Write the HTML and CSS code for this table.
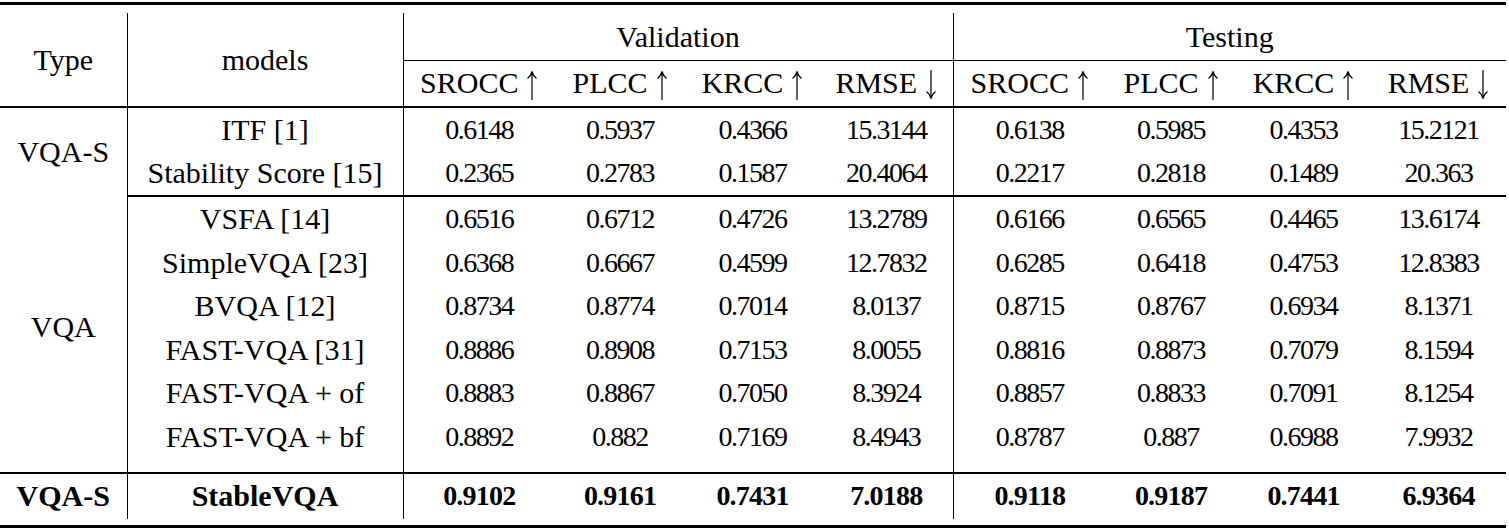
FILE: index.html
```html
<!DOCTYPE html>
<html>
<head>
<meta charset="utf-8">
<link rel="stylesheet" href="styles.css">
</head>
<body>
<div class="sheet">
<table class="results">
<colgroup>
<col class="w-type"><col class="w-model">
<col class="w-a"><col class="w-b"><col class="w-c"><col class="w-d">
<col class="w-e"><col class="w-f"><col class="w-g"><col class="w-h">
</colgroup>
<tr class="spacer-top"><td></td><td></td><td></td><td></td><td></td><td></td><td></td><td></td><td></td><td></td></tr>
<tr class="head1">
<td rowspan="2" class="hdr-type">Type</td>
<td rowspan="2" class="vl hdr-type">models</td>
<td colspan="4" class="vl group">Validation</td>
<td colspan="4" class="vl group">Testing</td>
</tr>
<tr class="head2">
<td class="vl">SROCC<svg class="arr" viewBox="0 0 12 30"><path d="M6 2V30M1.5 8.5C4 6.5 5.3 4.5 6 1.5C6.7 4.5 8 6.5 10.5 8.5"/></svg></td>
<td>PLCC<svg class="arr" viewBox="0 0 12 30"><path d="M6 2V30M1.5 8.5C4 6.5 5.3 4.5 6 1.5C6.7 4.5 8 6.5 10.5 8.5"/></svg></td>
<td>KRCC<svg class="arr" viewBox="0 0 12 30"><path d="M6 2V30M1.5 8.5C4 6.5 5.3 4.5 6 1.5C6.7 4.5 8 6.5 10.5 8.5"/></svg></td>
<td>RMSE<svg class="arr" viewBox="0 0 12 30"><path d="M6 0V28M1.5 21.5C4 23.5 5.3 25.5 6 28.5C6.7 25.5 8 23.5 10.5 21.5"/></svg></td>
<td class="vl">SROCC<svg class="arr" viewBox="0 0 12 30"><path d="M6 2V30M1.5 8.5C4 6.5 5.3 4.5 6 1.5C6.7 4.5 8 6.5 10.5 8.5"/></svg></td>
<td>PLCC<svg class="arr" viewBox="0 0 12 30"><path d="M6 2V30M1.5 8.5C4 6.5 5.3 4.5 6 1.5C6.7 4.5 8 6.5 10.5 8.5"/></svg></td>
<td>KRCC<svg class="arr" viewBox="0 0 12 30"><path d="M6 2V30M1.5 8.5C4 6.5 5.3 4.5 6 1.5C6.7 4.5 8 6.5 10.5 8.5"/></svg></td>
<td>RMSE<svg class="arr" viewBox="0 0 12 30"><path d="M6 0V28M1.5 21.5C4 23.5 5.3 25.5 6 28.5C6.7 25.5 8 23.5 10.5 21.5"/></svg></td>
</tr>
<tr class="row">
<td rowspan="2" class="type">VQA-S</td>
<td class="vl">ITF [1]</td>
<td class="vl num">0.6148</td><td class="num">0.5937</td><td class="num">0.4366</td><td class="num">15.3144</td>
<td class="vl num">0.6138</td><td class="num">0.5985</td><td class="num">0.4353</td><td class="num">15.2121</td>
</tr>
<tr class="row end">
<td class="vl">Stability Score [15]</td>
<td class="vl num">0.2365</td><td class="num">0.2783</td><td class="num">0.1587</td><td class="num">20.4064</td>
<td class="vl num">0.2217</td><td class="num">0.2818</td><td class="num">0.1489</td><td class="num">20.363</td>
</tr>
<tr class="row">
<td rowspan="6" class="type">VQA</td>
<td class="vl">VSFA [14]</td>
<td class="vl num">0.6516</td><td class="num">0.6712</td><td class="num">0.4726</td><td class="num">13.2789</td>
<td class="vl num">0.6166</td><td class="num">0.6565</td><td class="num">0.4465</td><td class="num">13.6174</td>
</tr>
<tr class="row">
<td class="vl">SimpleVQA [23]</td>
<td class="vl num">0.6368</td><td class="num">0.6667</td><td class="num">0.4599</td><td class="num">12.7832</td>
<td class="vl num">0.6285</td><td class="num">0.6418</td><td class="num">0.4753</td><td class="num">12.8383</td>
</tr>
<tr class="row">
<td class="vl">BVQA [12]</td>
<td class="vl num">0.8734</td><td class="num">0.8774</td><td class="num">0.7014</td><td class="num">8.0137</td>
<td class="vl num">0.8715</td><td class="num">0.8767</td><td class="num">0.6934</td><td class="num">8.1371</td>
</tr>
<tr class="row">
<td class="vl">FAST-VQA [31]</td>
<td class="vl num">0.8886</td><td class="num">0.8908</td><td class="num">0.7153</td><td class="num">8.0055</td>
<td class="vl num">0.8816</td><td class="num">0.8873</td><td class="num">0.7079</td><td class="num">8.1594</td>
</tr>
<tr class="row">
<td class="vl">FAST-VQA + of</td>
<td class="vl num">0.8883</td><td class="num">0.8867</td><td class="num">0.7050</td><td class="num">8.3924</td>
<td class="vl num">0.8857</td><td class="num">0.8833</td><td class="num">0.7091</td><td class="num">8.1254</td>
</tr>
<tr class="row">
<td class="vl">FAST-VQA + bf</td>
<td class="vl num">0.8892</td><td class="num">0.882</td><td class="num">0.7169</td><td class="num">8.4943</td>
<td class="vl num">0.8787</td><td class="num">0.887</td><td class="num">0.6988</td><td class="num">7.9932</td>
</tr>
<tr class="gap end">
<td></td><td class="vl"></td><td class="vl" colspan="4"></td><td class="vl" colspan="4"></td>
</tr>
<tr class="row best">
<td class="type">VQA-S</td>
<td class="vl">StableVQA</td>
<td class="vl num">0.9102</td><td class="num">0.9161</td><td class="num">0.7431</td><td class="num">7.0188</td>
<td class="vl num">0.9118</td><td class="num">0.9187</td><td class="num">0.7441</td><td class="num">6.9364</td>
</tr>
<tr class="spacer-bottom"><td></td><td></td><td></td><td></td><td></td><td></td><td></td><td></td><td></td><td></td></tr>
</table>
</div>
</body>
</html>
```
FILE: styles.css
```css
html, body {
  margin: 0;
  padding: 0;
  background: #ffffff;
}

.sheet {
  margin-top: 2px;
  width: 1506px;
  border-top: 3px solid #000;
  border-bottom: 3px solid #000;
}

.results {
  width: 1506px;
  table-layout: fixed;
  border-collapse: collapse;
  font-family: "Liberation Serif", "Times New Roman", serif;
  font-size: 30px;
  color: #000;
}

.w-type { width: 127px; }
.w-model { width: 276px; }
.w-a { width: 152px; }
.w-b { width: 130px; }
.w-c { width: 135px; }
.w-d { width: 133px; }
.w-e { width: 153px; }
.w-f { width: 130px; }
.w-g { width: 135px; }
.w-h { width: 135px; }

.results td {
  padding: 0;
  text-align: center;
  vertical-align: middle;
  white-space: nowrap;
  line-height: 1;
}

.results .vl {
  border-left: 1px solid #000;
}

.results .num {
  font-size: 28px;
  letter-spacing: -1.5px;
}

.results .best .num {
  letter-spacing: -0.8px;
}

.arr {
  width: 12px;
  height: 30px;
  margin-left: 8px;
  vertical-align: -7px;
  fill: none;
  stroke: #000;
  stroke-width: 1.2;
}

.spacer-top td { height: 8px; }
.spacer-bottom td { height: 6px; }

.head1 td { height: 47px; }
.head1 .group { border-bottom: 1px solid #000; }
.head2 td { height: 45px; border-bottom: 2px solid #000; }
.head1 .hdr-type { border-bottom: 2px solid #000; }

.row td { height: 43.6px; }
.row.end td, .gap.end td { border-bottom: 2px solid #000; }
.gap td { height: 13px; }

.best td {
  height: 45px;
  font-weight: bold;
}
```
